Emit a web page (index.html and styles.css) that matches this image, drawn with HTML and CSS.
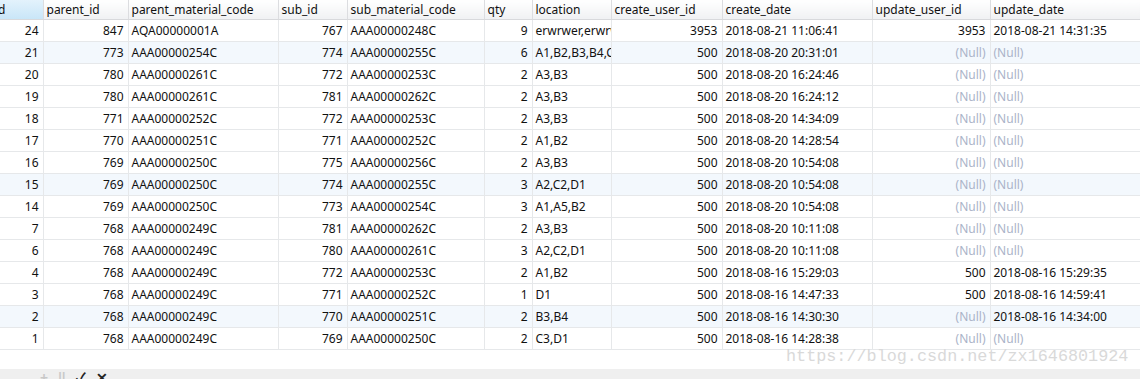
FILE: index.html
```html
<!DOCTYPE html>
<html lang="zh">

<head>
    <meta charset="UTF-8">
    <title>bom</title>
    <link rel="stylesheet" href="styles.css">
</head>

<body>
    <div class="grid">
        <table class="data">
            <colgroup>
                <col class="c-id"><col class="c-pid"><col class="c-pcode"><col class="c-sid"><col class="c-scode">
                <col class="c-qty"><col class="c-loc"><col class="c-cuid"><col class="c-cdate"><col class="c-uuid"><col class="c-udate">
            </colgroup>
            <thead>
                <tr>
                    <th class="first"><span>id</span></th>
                    <th>parent_id</th>
                    <th>parent_material_code</th>
                    <th>sub_id</th>
                    <th>sub_material_code</th>
                    <th>qty</th>
                    <th>location</th>
                    <th>create_user_id</th>
                    <th>create_date</th>
                    <th>update_user_id</th>
                    <th>update_date</th>
                </tr>
            </thead>
            <tbody>
                <tr><td class="num">24</td><td class="num">847</td><td>AQA00000001A</td><td class="num">767</td><td>AAA00000248C</td><td class="num">9</td><td>erwrwer,erwrwer</td><td class="num">3953</td><td>2018-08-21 11:06:41</td><td class="num">3953</td><td>2018-08-21 14:31:35</td></tr>
                <tr class="hl"><td class="num">21</td><td class="num">773</td><td>AAA00000254C</td><td class="num">774</td><td>AAA00000255C</td><td class="num">6</td><td>A1,B2,B3,B4,C1</td><td class="num">500</td><td>2018-08-20 20:31:01</td><td class="num null">(Null)</td><td class="null">(Null)</td></tr>
                <tr><td class="num">20</td><td class="num">780</td><td>AAA00000261C</td><td class="num">772</td><td>AAA00000253C</td><td class="num">2</td><td>A3,B3</td><td class="num">500</td><td>2018-08-20 16:24:46</td><td class="num null">(Null)</td><td class="null">(Null)</td></tr>
                <tr><td class="num">19</td><td class="num">780</td><td>AAA00000261C</td><td class="num">781</td><td>AAA00000262C</td><td class="num">2</td><td>A3,B3</td><td class="num">500</td><td>2018-08-20 16:24:12</td><td class="num null">(Null)</td><td class="null">(Null)</td></tr>
                <tr><td class="num">18</td><td class="num">771</td><td>AAA00000252C</td><td class="num">772</td><td>AAA00000253C</td><td class="num">2</td><td>A3,B3</td><td class="num">500</td><td>2018-08-20 14:34:09</td><td class="num null">(Null)</td><td class="null">(Null)</td></tr>
                <tr><td class="num">17</td><td class="num">770</td><td>AAA00000251C</td><td class="num">771</td><td>AAA00000252C</td><td class="num">2</td><td>A1,B2</td><td class="num">500</td><td>2018-08-20 14:28:54</td><td class="num null">(Null)</td><td class="null">(Null)</td></tr>
                <tr><td class="num">16</td><td class="num">769</td><td>AAA00000250C</td><td class="num">775</td><td>AAA00000256C</td><td class="num">2</td><td>A3,B3</td><td class="num">500</td><td>2018-08-20 10:54:08</td><td class="num null">(Null)</td><td class="null">(Null)</td></tr>
                <tr class="hl"><td class="num">15</td><td class="num">769</td><td>AAA00000250C</td><td class="num">774</td><td>AAA00000255C</td><td class="num">3</td><td>A2,C2,D1</td><td class="num">500</td><td>2018-08-20 10:54:08</td><td class="num null">(Null)</td><td class="null">(Null)</td></tr>
                <tr><td class="num">14</td><td class="num">769</td><td>AAA00000250C</td><td class="num">773</td><td>AAA00000254C</td><td class="num">3</td><td>A1,A5,B2</td><td class="num">500</td><td>2018-08-20 10:54:08</td><td class="num null">(Null)</td><td class="null">(Null)</td></tr>
                <tr><td class="num">7</td><td class="num">768</td><td>AAA00000249C</td><td class="num">781</td><td>AAA00000262C</td><td class="num">2</td><td>A3,B3</td><td class="num">500</td><td>2018-08-20 10:11:08</td><td class="num null">(Null)</td><td class="null">(Null)</td></tr>
                <tr><td class="num">6</td><td class="num">768</td><td>AAA00000249C</td><td class="num">780</td><td>AAA00000261C</td><td class="num">3</td><td>A2,C2,D1</td><td class="num">500</td><td>2018-08-20 10:11:08</td><td class="num null">(Null)</td><td class="null">(Null)</td></tr>
                <tr><td class="num">4</td><td class="num">768</td><td>AAA00000249C</td><td class="num">772</td><td>AAA00000253C</td><td class="num">2</td><td>A1,B2</td><td class="num">500</td><td>2018-08-16 15:29:03</td><td class="num">500</td><td>2018-08-16 15:29:35</td></tr>
                <tr><td class="num">3</td><td class="num">768</td><td>AAA00000249C</td><td class="num">771</td><td>AAA00000252C</td><td class="num">1</td><td>D1</td><td class="num">500</td><td>2018-08-16 14:47:33</td><td class="num">500</td><td>2018-08-16 14:59:41</td></tr>
                <tr class="hl"><td class="num">2</td><td class="num">768</td><td>AAA00000249C</td><td class="num">770</td><td>AAA00000251C</td><td class="num">2</td><td>B3,B4</td><td class="num">500</td><td>2018-08-16 14:30:30</td><td class="num null">(Null)</td><td>2018-08-16 14:34:00</td></tr>
                <tr><td class="num">1</td><td class="num">768</td><td>AAA00000249C</td><td class="num">769</td><td>AAA00000250C</td><td class="num">2</td><td>C3,D1</td><td class="num">500</td><td>2018-08-16 14:28:38</td><td class="num null">(Null)</td><td class="null">(Null)</td></tr>
            </tbody>
        </table>
        <div class="mark">https://blog.csdn.net/zx1646801924</div>
    </div>

    <div class="toolbar">
        <span class="tool dim">+</span>
        <span class="tool dim">&#8214;</span>
        <span class="tool">&#10003;</span>
        <span class="tool">&#10005;</span>
    </div>
</body>

</html>
```

FILE: styles.css
```css
body {
    margin: 0;
    background-color: #ffffff;
    font-family: "Noto Sans", "Noto Sans CJK SC", sans-serif;
    font-size: 12px;
    color: #111111;
}

.grid {
    position: relative;
    height: 369px;
    overflow: hidden;
}

.data {
    border-collapse: collapse;
    table-layout: fixed;
    width: 1140px;
}

.c-id { width: 43px; }
.c-pid { width: 85px; }
.c-pcode { width: 150px; }
.c-sid { width: 69px; }
.c-scode { width: 137px; }
.c-qty { width: 48px; }
.c-loc { width: 79px; }
.c-cuid { width: 111px; }
.c-cdate { width: 150px; }
.c-uuid { width: 118px; }
.c-udate { width: 150px; }

th {
    height: 19px;
    padding: 0 3px;
    text-align: left;
    font-weight: normal;
    white-space: nowrap;
    overflow: hidden;
    background: linear-gradient(#ffffff, #f0f1f3);
    border-right: 1px solid #dcdde0;
    border-bottom: 1px solid #d8d9dc;
}

th.first {
    background: linear-gradient(#e3f2fc, #c9e6f8);
    padding: 0;
}

th.first span {
    margin-left: -5px;
}

td {
    height: 21px;
    padding: 0 3px;
    white-space: nowrap;
    overflow: hidden;
    text-overflow: clip;
    border-right: 1px solid #e6e8ea;
    border-bottom: 1px solid #e6e8ea;
}

tr.hl td {
    background-color: #f3f8fd;
}

td.num {
    text-align: right;
    padding-right: 4px;
}

td.null {
    color: #aab3c8;
}

.mark {
    position: absolute;
    left: 786px;
    top: 347px;
    font-family: "Liberation Mono", monospace;
    font-size: 16.8px;
    color: #d9d9d9;
    white-space: nowrap;
}

.toolbar {
    height: 10px;
    background-color: #efefef;
    display: flex;
    gap: 10px;
    padding-left: 40px;
    overflow: hidden;
}

.tool {
    font-size: 14px;
    line-height: 18px;
    color: #222222;
    font-weight: bold;
}

.tool.dim {
    color: #c8c8c8;
}
```
